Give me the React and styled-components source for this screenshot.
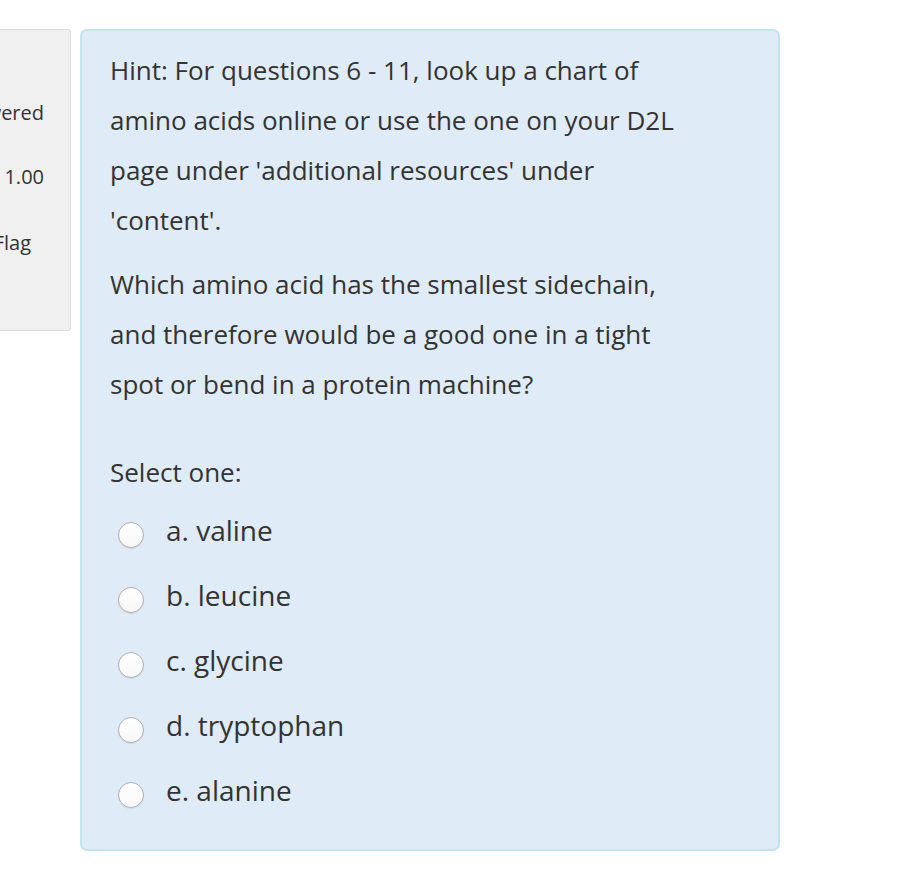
import styled, { createGlobalStyle } from 'styled-components'

const GlobalStyle = createGlobalStyle`
  html, body {
    margin: 0;
    padding: 0;
    background: #fff;
  }
  body {
    font-family: "Open Sans", "Liberation Sans", sans-serif;
    color: #333;
  }
`

const options = [
  'a. valine',
  'b. leucine',
  'c. glycine',
  'd. tryptophan',
  'e. alanine',
]

export default function App() {
  return (
    <>
      <GlobalStyle />
      <Page>
        <Info>
          <InfoLine>answered</InfoLine>
          <InfoLine>1.00</InfoLine>
          <InfoLine $inset={13} $shift={2}>Flag</InfoLine>
        </Info>
        <Formulation>
          <Para>
            Hint: For questions 6 - 11, look up a chart of amino acids online or use the one on
            your D2L page under 'additional resources' under 'content'.
          </Para>
          <Para>
            Which amino acid has the smallest sidechain, and therefore would be a good one in a
            tight spot or bend in a protein machine?
          </Para>
          <Prompt>Select one:</Prompt>
          <Answers>
            {options.map((o) => (
              <Option key={o}>
                <Radio type="radio" name="q6" />
                <span>{o}</span>
              </Option>
            ))}
          </Answers>
        </Formulation>
      </Page>
    </>
  )
}

const Page = styled.div`
  display: flex;
  align-items: flex-start;
  gap: 9px;
  padding-top: 29px;
`

const Info = styled.div`
  width: 140px;
  margin-left: -69px;
  height: 302px;
  box-sizing: border-box;
  background: #f0f0f0;
  border: 1px solid #d9d9d9;
  border-radius: 3px;
  padding-top: 69px;
  display: flex;
  flex-direction: column;
  align-items: flex-end;
  gap: 36px;
  flex-shrink: 0;
`

const InfoLine = styled.div`
  font-size: 20px;
  line-height: 28px;
  padding-right: ${(p) => 26 + (p.$inset || 0)}px;
  margin-top: ${(p) => p.$shift || 0}px;
`

const Formulation = styled.div`
  width: 700px;
  height: 822px;
  box-sizing: border-box;
  background: #dfebf6;
  border: 2px solid #c3e3ed;
  border-radius: 7px;
  padding: 14px 98px 0 28px;
  flex-shrink: 0;
`

const Para = styled.p`
  margin: 0 0 14px;
  font-size: 26px;
  line-height: 50px;
`

const Prompt = styled.div`
  margin-top: 38px;
  font-size: 26px;
  line-height: 50px;
`

const Answers = styled.div`
  display: flex;
  flex-direction: column;
  gap: 15px;
  margin-top: 8px;
`

const Option = styled.label`
  display: flex;
  align-items: center;
  font-size: 28px;
  line-height: 50px;
  gap: 22px;
`

const Radio = styled.input`
  appearance: none;
  margin: 10px 0 0 8px;
  width: 26px;
  height: 26px;
  border-radius: 50%;
  border: 1.5px solid #b0b0b0;
  background: linear-gradient(#fff, #f7f7f7);
  box-shadow: 0 1px 1px rgba(0, 0, 0, 0.08);
`
